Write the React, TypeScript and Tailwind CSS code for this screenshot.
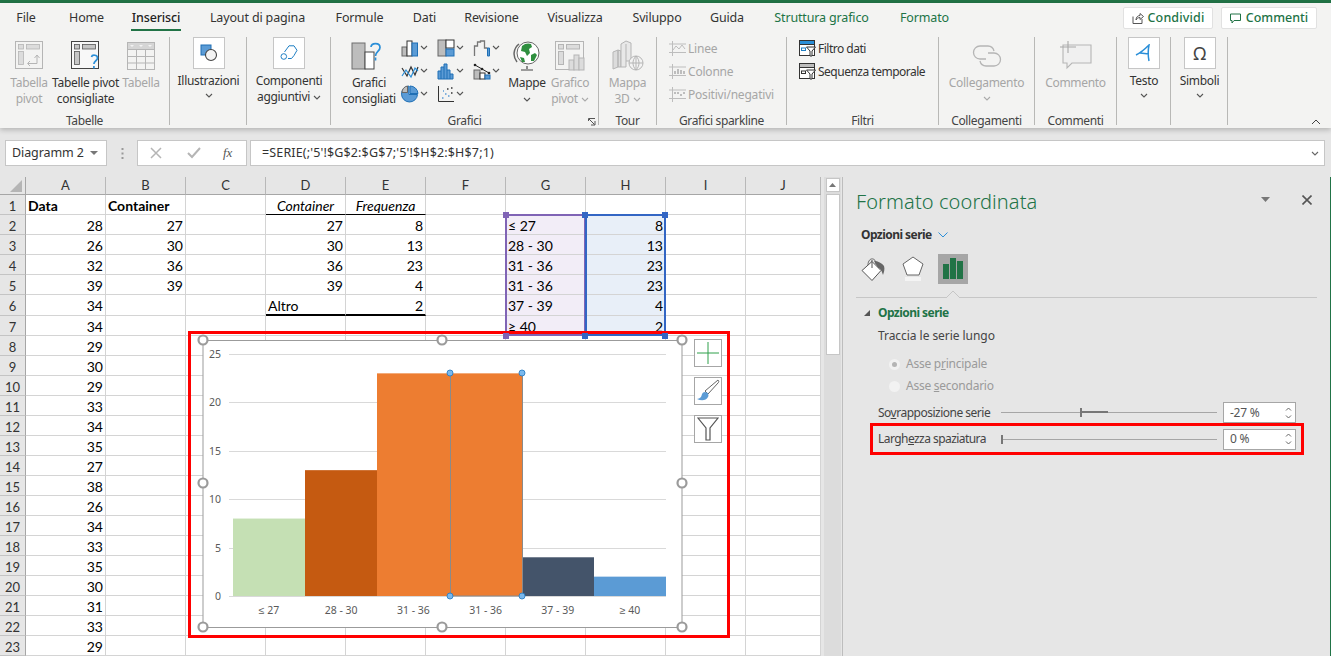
import React from 'react';

const GREEN = '#217346';

const tabs = [
  { label: 'File', w: 'w-[52px]', cls: '' },
  { label: 'Home', w: 'w-[69px]', cls: '' },
  { label: 'Inserisci', w: 'w-[70px]', cls: 'active' },
  { label: 'Layout di pagina', w: 'w-[133px]', cls: '' },
  { label: 'Formule', w: 'w-[71px]', cls: '' },
  { label: 'Dati', w: 'w-[59px]', cls: '' },
  { label: 'Revisione', w: 'w-[75px]', cls: '' },
  { label: 'Visualizza', w: 'w-[92px]', cls: '' },
  { label: 'Sviluppo', w: 'w-[72px]', cls: '' },
  { label: 'Guida', w: 'w-[68px]', cls: '' },
  { label: 'Struttura grafico', w: 'w-[121px]', cls: 'context' },
  { label: 'Formato', w: 'w-[85px]', cls: 'context' },
];

const Chevron = ({ c = '#555' }: { c?: string }) => (
  <svg width="8" height="5" viewBox="0 0 8 5" className="shrink-0">
    <path d="M1 1l3 3 3-3" fill="none" stroke={c} strokeWidth="1.1" />
  </svg>
);

const PivotIcon = ({ c, q }: { c: string; q?: boolean }) => (
  <svg width="29" height="29" viewBox="0 0 29 29">
    <rect x="0.5" y="0.5" width="27" height="27" fill={q ? '#f8f8f8' : 'none'} stroke={c} />
    <rect x="3.5" y="3.5" width="5" height="4.5" fill={q ? '#c6c6c6' : '#dcdcdc'} stroke={q ? '#555' : c} strokeWidth="0.8" />
    <rect x="11.5" y="3.5" width="13" height="4.5" fill={q ? '#c6c6c6' : '#dcdcdc'} stroke={q ? '#555' : c} strokeWidth="0.8" />
    <rect x="3.5" y="10.5" width="5" height="13" fill={q ? '#c6c6c6' : '#dcdcdc'} stroke={q ? '#555' : c} strokeWidth="0.8" />
    {q ? (
      <path d="M20.5 16c.5-2.5 6-2.5 6 1 0 2.8-3.6 2.7-3.6 6M22.9 25v2.6" fill="none" stroke="#2b8fd8" strokeWidth="1.7" />
    ) : (
      <path d="M13 22.5h9v-8M19.5 17l2.5-3 2.5 3M15 20l-2.5 2.5L15 25" fill="none" stroke={c} />
    )}
  </svg>
);

const TableIcon = () => (
  <svg width="28" height="28" viewBox="0 0 28 28">
    <rect x="0.5" y="0.5" width="27" height="27" fill="none" stroke="#b5b5b5" />
    <rect x="1" y="1" width="26" height="6" fill="#d5d5d5" />
    <path d="M.5 7.5h27M.5 14.5h27M.5 21h27M9.5 7v21M18.5 7v21" stroke="#b5b5b5" />
    <path d="M3 3h4L5 5zM12 3h4l-2 2zM21 3h4l-2 2z" fill="#f3f3f3" />
  </svg>
);

const ShapesIcon = () => (
  <svg width="18" height="18" viewBox="0 0 18 18">
    <rect x="1" y="1" width="10" height="10" fill="#5b9bd5" stroke="#1f6fb5" />
    <circle cx="11" cy="11" r="5.5" fill="#f3f3f3" stroke="#444" strokeWidth="1.1" />
  </svg>
);

const AddinIcon = () => (
  <svg width="18" height="18" viewBox="0 0 18 18" fill="none">
    <path d="M4.5 8l4.5-6.2h5l3 4.5-3 5.2-2.5 3H8" stroke="#1f7fc4" strokeWidth="1" />
    <circle cx="3.8" cy="12.5" r="2.8" stroke="#1f7fc4" strokeWidth="1" />
  </svg>
);

const RecommendedIcon = () => (
  <svg width="36" height="30" viewBox="0 0 36 30">
    <rect x="1" y="2" width="13" height="26" fill="#bdbdbd" stroke="#6e6e6e" />
    <rect x="14" y="11" width="9" height="17" fill="#fff" stroke="#444" />
    <path d="M20 6c.5-4.5 9-4.5 9 .5 0 4-4.5 4-4.5 8.500M24.500 16.500v3" fill="none" stroke="#2b8fd8" strokeWidth="1.7" />
  </svg>
);

const smallCharts: Record<string, React.ReactNode> = {
  col: (
    <>
      <rect x="1" y="8" width="5" height="9" fill="#bdbdbd" stroke="#666" />
      <rect x="6" y="2" width="5" height="15" fill="#fff" stroke="#333" />
      <rect x="11" y="4" width="5.500" height="13" fill="#5b9bd5" stroke="#1f6fb5" />
    </>
  ),
  hier: (
    <>
      <rect x="1" y="1" width="8" height="16" fill="#bdbdbd" stroke="#666" />
      <rect x="9" y="1" width="8" height="8" fill="#fff" stroke="#333" />
      <rect x="9" y="10" width="8" height="7" fill="#5b9bd5" stroke="#1f6fb5" />
    </>
  ),
  water: (
    <>
      <path d="M1.500 17V7h3V3h3v-1h4v7h3" fill="none" stroke="#777" strokeWidth="1.300" />
      <path d="M14.500 9v8h2V9z" fill="#5b9bd5" stroke="#1f6fb5" />
    </>
  ),
  line: (
    <>
      <path d="M1 6l5 8 4-9 4 8 3-8" fill="none" stroke="#333" strokeWidth="1.200" />
      <path d="M1 14l4-6 5 7 4-9 3 3" fill="none" stroke="#2b8fd8" strokeWidth="1.200" />
    </>
  ),
  hist: (
    <>
      <path d="M1 17V9h3V5h3V2h3v6h3v4h3v5z" fill="#5b9bd5" stroke="#1f6fb5" />
      <path d="M4 9v8M7 5v12M10 8v9M13 12v5" stroke="#1f6fb5" />
    </>
  ),
  combo: (
    <>
      <rect x="1" y="8" width="6" height="9" fill="#bdbdbd" stroke="#666" />
      <rect x="7" y="11" width="5" height="6" fill="#fff" stroke="#333" />
      <rect x="12" y="13" width="5" height="4" fill="#5b9bd5" stroke="#1f6fb5" />
      <path d="M2 3l7 4 7 4" stroke="#222" />
      <circle cx="2" cy="3" r="1.300" fill="#222" />
      <circle cx="9" cy="7" r="1.300" fill="#222" />
      <circle cx="16" cy="11" r="1.300" fill="#222" />
    </>
  ),
  pie: (
    <>
      <path d="M8 1a8 8 0 1 0 8.500 8.500H8z" fill="#5b9bd5" stroke="#1f6fb5" />
      <path d="M6.500 1a6.500 6.500 0 0 0-5.500 6.500h5.500z" fill="#bdbdbd" stroke="#666" />
      <path d="M9 1a8 8 0 0 1 8 7.500H9z" fill="#5b9bd5" stroke="#1f6fb5" />
    </>
  ),
  scatter: (
    <>
      <path d="M1.500 1v15.500H17" fill="none" stroke="#333" />
      <path d="M5 13h1.500M8 9h1.500M11 11h1.500M6 6h1" stroke="#5b9bd5" strokeWidth="1.500" />
      <path d="M10 4h1.500M14 3h1.500M14 8h1.500" stroke="#333" strokeWidth="1.500" />
    </>
  ),
};

const SmallChart = ({ name }: { name: string }) => (
  <div className="flex items-center gap-[1px] h-[23px]">
    <svg width="18" height="18" viewBox="0 0 18 18">{smallCharts[name]}</svg>
    <Chevron />
  </div>
);

const GlobeIcon = () => (
  <svg width="28" height="32" viewBox="0 0 28 32">
    <path d="M4 22A12.500 12.500 0 0 1 6 4" fill="none" stroke="#666" strokeWidth="1.500" />
    <path d="M14 26v3M8 30h12" stroke="#444" strokeWidth="1.200" />
    <circle cx="15" cy="13" r="11" fill="#fff" stroke="#666" />
    <path d="M9 6c3-3 7-3 9-2l1 3-3 2 1 4-3 3-2-4-4-1zM18 15l4-2 2 2-3 6-3 0zM7 17l4 1 1 4-3 0z" fill="#2f8f3f" />
  </svg>
);

const PivotChartIcon = () => (
  <svg width="30" height="30" viewBox="0 0 30 30" fill="none" stroke="#b5b5b5">
    <rect x="0.500" y="0.500" width="28" height="28" />
    <rect x="3.500" y="3.500" width="5" height="4.500" fill="#dcdcdc" />
    <rect x="11.500" y="3.500" width="13" height="4.500" fill="#dcdcdc" />
    <rect x="3.500" y="10.500" width="5" height="13" fill="#dcdcdc" />
    <rect x="14" y="19" width="5" height="10" fill="#dcdcdc" />
    <rect x="19" y="14" width="5" height="15" fill="#dcdcdc" />
    <rect x="24" y="17" width="5" height="12" fill="#dcdcdc" />
  </svg>
);

const Map3DIcon = () => (
  <svg width="32" height="32" viewBox="0 0 32 32" fill="none" stroke="#b5b5b5">
    <path d="M1 12l5-2v17l-5 2zM6 10l3 1v16l-3 0z" fill="#dcdcdc" />
    <path d="M9 4l5-3 5 2v18H14v6H9z" fill="#e8e8e8" />
    <path d="M14 4v17" />
    <circle cx="24" cy="23" r="7" fill="#f3f3f3" />
    <path d="M17 23h14M24 16v14M24 16c-4 4-4 10 0 14M24 16c4 4 4 10 0 14" />
  </svg>
);

const Spark = ({ kind }: { kind: string }) => (
  <svg width="17" height="15" viewBox="0 0 17 15" fill="none" stroke="#bdbdbd">
    <path d="M0 3h17M0 11.500h17M3.500 0v15" />
    {kind === 'line' && <path d="M4 9l3-4 3 3 3-4 3 4" />}
    {kind === 'col' && <path d="M6 10V7M9 10V5M12 10V6M15 10V7" strokeWidth="2" />}
    {kind === 'neg' && <path d="M6 7V5M9 7V5M12 9V7M15 7V5" strokeWidth="2" />}
  </svg>
);

const SlicerIcon = ({ blue }: { blue?: boolean }) => (
  <svg width="17" height="17" viewBox="0 0 17 17" fill="none">
    <rect x="0.500" y="0.500" width="15" height="15" stroke="#333" fill="#fff" />
    <rect x="1" y="1" width="14" height="3" fill={blue ? '#2b8fd8' : '#bdbdbd'} />
    <path d="M.5 4.500h15" stroke="#333" />
    <rect x="2.500" y="8" width="4" height="2.500" stroke={blue ? '#1f7fc4' : '#333'} />
    <path d="M7.500 7h9l-3.500 4v5h-2v-5z" fill="#fff" stroke="#333" />
  </svg>
);

const LinkIcon = () => (
  <svg width="30" height="22" viewBox="0 0 30 22" fill="none" stroke="#b5b5b5" strokeWidth="1.300">
    <path d="M14 14H8a6.500 6.500 0 0 1 0-13h8a6.500 6.500 0 0 1 6 5" />
    <path d="M16 8h6a6.500 6.500 0 0 1 0 13h-8a6.500 6.500 0 0 1-6-5" />
  </svg>
);

const CommentIcon = () => (
  <svg width="32" height="29" viewBox="0 0 32 29" fill="none" stroke="#b5b5b5" strokeWidth="1.100">
    <path d="M3 4h28v18H12l-5 5v-5H3z" fill="#f0f0f0" />
    <path d="M8 0v12M0 6h16" stroke="#a8a8a8" />
  </svg>
);

const TextIcon = () => (
  <svg width="18" height="18" viewBox="0 0 18 18" fill="none" stroke="#2b8fd8" strokeWidth="1.500">
    <path d="M1 11c4-2 9-6 13-10-1 5-1 11 0 16M5 9l9 1" />
  </svg>
);

const GroupLabel = ({ children }: { children?: React.ReactNode }) => (
  <div className="h-[12px] text-center text-[12px] leading-[16px] text-[#444] tracking-[-0.35px] shrink-0 whitespace-nowrap">{children}</div>
);

const Group = ({ w, label, children }: { w: string; label?: string; children: React.ReactNode }) => (
  <div className={`${w} h-[88px] border-r border-[#b8b8b6] flex flex-col shrink-0 relative`}>
    <div className="flex-1 flex min-h-0">{children}</div>
    <GroupLabel>{label}</GroupLabel>
  </div>
);

const BigBtn = ({ w, icon, lines, off, chev, chevBelow }: { w: string; icon: React.ReactNode; lines: string[]; off?: boolean; chev?: boolean; chevBelow?: boolean }) => (
  <div className={`${w} flex flex-col items-center shrink-0 text-[12px] leading-[16px] tracking-[-0.3px] ${off ? 'text-[#a6a6a6]' : 'text-[#333]'}`}>
    <div className="h-[37px] mb-px flex items-center justify-center shrink-0">{icon}</div>
    {lines.map((l, i) => (
      <div key={l} className="flex items-center gap-[3px] whitespace-nowrap h-[16px]">
        {l}
        {chev && i === lines.length - 1 && <Chevron c={off ? '#aaa' : '#555'} />}
      </div>
    ))}
    {chevBelow && <div className="h-[15px] flex items-center"><Chevron c="#aaa" /></div>}
  </div>
);

const BoxBtn = ({ icon, lines, chevInline, chevBelow }: { icon: React.ReactNode; lines: string[]; chevInline?: boolean; chevBelow?: boolean }) => (
  <div className="flex-1 flex flex-col items-center pl-px text-[12px] leading-[16px] tracking-[-0.3px] text-[#333]">
    <div className="w-[32px] h-[32px] bg-white border border-[#c6c6c6] flex items-center justify-center shrink-0">{icon}</div>
    <div className="h-[4px] shrink-0" />
    {lines.map((l, i) => (
      <div key={l} className="flex items-center gap-[3px] whitespace-nowrap h-[16px]">
        {l}
        {chevInline && i === lines.length - 1 && <Chevron />}
      </div>
    ))}
    {chevBelow && <div className="h-[13px] flex items-center"><Chevron /></div>}
  </div>
);

const Ribbon = () => (
  <div className="bg-[#f3f3f2] h-[125px] shadow-[0_2px_5px_rgba(0,0,0,0.22)] relative">
    <div className="flex h-[34px]">
      {tabs.map((t) => (
        <div key={t.label} className={`${t.w} shrink-0 flex justify-center pt-[6px] text-[12.5px] leading-[18px] tracking-[-0.15px] ${t.cls === 'context' ? 'text-[#217346]' : 'text-[#333]'}`}>
          <span className={t.cls === 'active' ? 'border-b-2 border-[#217346] h-[22px] px-px font-medium text-[#222]' : ''}>{t.label}</span>
        </div>
      ))}
      <div className="ml-auto flex gap-[8px] mr-[14px] mt-[4px]">
        <div className="w-[90px] h-[22px] bg-white border border-[#e1e1e1] rounded-[2px] flex items-center justify-center gap-[4px] text-[12.5px] font-medium text-[#217346] tracking-[0.15px]">
          <svg width="12" height="12" viewBox="0 0 12 12" fill="none" stroke="#555"><path d="M1 4.500v7h9V7M4 8c0-3 2-4.500 4-4.500V1.500L11.500 4.500 8 7.500V5.500C6 5.500 5 6.500 4 8z" /></svg>
          Condividi
        </div>
        <div className="w-[96px] h-[22px] bg-white border border-[#e1e1e1] rounded-[2px] flex items-center justify-center gap-[5px] text-[12.5px] font-medium text-[#217346] tracking-[0px]">
          <svg width="11" height="11" viewBox="0 0 11 11" fill="none" stroke="#217346"><path d="M.5 1h10v6.500H4L2 10V7.500H.5z" /></svg>
          Commenti
        </div>
      </div>
    </div>
    <div className="flex h-[88px]">
      <Group w="w-[170px]" label="Tabelle">
        <BigBtn w="w-[58px]" off icon={<PivotIcon c="#b5b5b5" />} lines={['Tabella', 'pivot']} />
        <BigBtn w="w-[55px]" icon={<PivotIcon c="#444" q />} lines={['Tabelle pivot', 'consigliate']} />
        <BigBtn w="w-[56px]" off icon={<TableIcon />} lines={['Tabella']} />
      </Group>
      <Group w="w-[77px]">
        <BoxBtn icon={<ShapesIcon />} lines={['Illustrazioni']} chevBelow />
      </Group>
      <Group w="w-[84px]">
        <BoxBtn icon={<AddinIcon />} lines={['Componenti', 'aggiuntivi']} chevInline />
      </Group>
      <Group w="w-[268px]" label="Grafici">
        <BigBtn w="w-[76px]" icon={<RecommendedIcon />} lines={['Grafici', 'consigliati']} />
        <div className="flex gap-[9px] -ml-[6px] -mt-px">
          <div className="flex flex-col"><SmallChart name="col" /><SmallChart name="line" /><SmallChart name="pie" /></div>
          <div className="flex flex-col"><SmallChart name="hier" /><SmallChart name="hist" /><SmallChart name="scatter" /></div>
          <div className="flex flex-col"><SmallChart name="water" /><SmallChart name="combo" /></div>
        </div>
        <div className="w-[50px] shrink-0 flex flex-col items-center ml-[2px] text-[12px] leading-[16px] tracking-[-0.3px] text-[#333]">
          <div className="h-[37px] mb-px flex items-center"><GlobeIcon /></div>
          <div className="h-[16px]">Mappe</div>
          <div className="h-[16px] flex items-center"><Chevron /></div>
        </div>
        <BigBtn w="w-[36px]" off icon={<PivotChartIcon />} lines={['Grafico', 'pivot']} chev />
        <svg width="8" height="8" viewBox="0 0 8 8" className="absolute right-[2px] bottom-[-1px]" fill="none" stroke="#555">
          <path d="M.5 3V.5H7M1 1l5.500 5.500M3 7h4V3" />
        </svg>
      </Group>
      <Group w="w-[58px]" label="Tour">
        <BigBtn w="w-full" off icon={<Map3DIcon />} lines={['Mappa', '3D']} chev />
      </Group>
      <Group w="w-[130px]" label="Grafici sparkline">
        <div className="flex flex-col pl-[12px] text-[12px] tracking-[-0.2px] text-[#a6a6a6]">
          {[['line', 'Linee'], ['col', 'Colonne'], ['neg', 'Positivi/negativi']].map(([k, l]) => (
            <div key={k} className="flex items-center gap-[2px] h-[23px] whitespace-nowrap"><Spark kind={k} />{l}</div>
          ))}
        </div>
      </Group>
      <Group w="w-[152px]" label="Filtri">
        <div className="flex flex-col pl-[12px] text-[12px] tracking-[-0.5px] text-[#333]">
          <div className="flex items-center gap-[2px] h-[23px] whitespace-nowrap"><SlicerIcon blue />Filtro dati</div>
          <div className="flex items-center gap-[2px] h-[23px] whitespace-nowrap"><SlicerIcon />Sequenza temporale</div>
        </div>
      </Group>
      <Group w="w-[96px]" label="Collegamenti">
        <BigBtn w="w-full" off icon={<LinkIcon />} lines={['Collegamento']} chevBelow />
      </Group>
      <Group w="w-[82px]" label="Commenti">
        <BigBtn w="w-full" off icon={<CommentIcon />} lines={['Commento']} />
      </Group>
      <Group w="w-[54px]">
        <BoxBtn icon={<TextIcon />} lines={['Testo']} chevBelow />
      </Group>
      <Group w="w-[57px]">
        <BoxBtn icon={<span className="text-[18px] leading-none text-[#444]">Ω</span>} lines={['Simboli']} chevBelow />
      </Group>
    </div>
    <svg width="10" height="6" viewBox="0 0 10 6" className="absolute right-[10px] bottom-[3px]" fill="none" stroke="#444"><path d="M1 5l4-4 4 4" /></svg>
  </div>
);

const FormulaBar = () => (
  <div className="flex items-stretch h-[26px] mt-[12px] text-[12.5px] text-[#333] pl-[5px] pr-[6px]">
    <div className="w-[102px] bg-white border border-[#c6c6c6] flex items-center pl-[6px] pr-[8px] justify-between tracking-[-0.1px]">
      Diagramm 2
      <svg width="8" height="4" viewBox="0 0 8 4"><path d="M0 0h8L4 4z" fill="#777" /></svg>
    </div>
    <div className="w-[30px] flex items-center justify-center">
      <svg width="3" height="11" viewBox="0 0 3 11"><path d="M1.500 0v2M1.500 4.500v2M1.500 9v2" stroke="#999" strokeWidth="2" /></svg>
    </div>
    <div className="w-[110px] bg-white border border-[#c6c6c6] flex items-center pl-[12px]">
      <svg width="12" height="12" viewBox="0 0 12 12" fill="none" stroke="#b5b5b5" strokeWidth="1.500"><path d="M1 1l10 10M11 1L1 11" /></svg>
      <svg width="14" height="12" viewBox="0 0 14 12" fill="none" stroke="#b5b5b5" strokeWidth="2" className="ml-[25px]"><path d="M1 6l4 4 8-9" /></svg>
      <span className="ml-[22px] italic font-['Liberation_Serif',serif] text-[13px] text-[#555]">fx</span>
    </div>
    <div className="ml-[3px] flex-1 bg-white border border-[#c6c6c6] flex items-center pl-[11px] pr-[5px] justify-between tracking-[0.15px]">
      =SERIE(;'5'!$G$2:$G$7;'5'!$H$2:$H$7;1)
      <Chevron c="#666" />
    </div>
  </div>
);

const COLS = ['A', 'B', 'C', 'D', 'E', 'F', 'G', 'H', 'I', 'J'];
const COLW = ['w-20', 'w-20', 'w-20', 'w-20', 'w-20', 'w-20', 'w-20', 'w-20', 'w-20', 'w-[75px]'];
const DATA_A = [28, 26, 32, 39, 34, 34, 29, 30, 29, 33, 34, 35, 27, 38, 26, 34, 33, 35, 30, 31, 33, 29];

type Cell = { t?: string | number; align?: string; cls?: string };
const LEFT = 'text-left pl-[2px]';
const CENTER = 'text-center';
const cells: Record<string, Cell> = {
  A1: { t: 'Data', align: LEFT, cls: 'font-bold' },
  B1: { t: 'Container', align: LEFT, cls: 'font-bold' },
  D1: { t: 'Container', align: CENTER, cls: 'italic border-b-black' },
  E1: { t: 'Frequenza', align: CENTER, cls: 'italic border-b-black' },
  B2: { t: 27 }, B3: { t: 30 }, B4: { t: 36 }, B5: { t: 39 },
  D2: { t: 27 }, D3: { t: 30 }, D4: { t: 36 }, D5: { t: 39 },
  E2: { t: 8 }, E3: { t: 13 }, E4: { t: 23 }, E5: { t: 4 },
  D6: { t: 'Altro', align: LEFT, cls: 'border-b-2 border-b-black' },
  E6: { t: 2, cls: 'border-b-2 border-b-black' },
  G2: { t: '≤ 27', align: LEFT }, G3: { t: '28 - 30', align: LEFT }, G4: { t: '31 - 36', align: LEFT },
  G5: { t: '31 - 36', align: LEFT }, G6: { t: '37 - 39', align: LEFT }, G7: { t: '≥ 40', align: LEFT },
  H2: { t: 8 }, H3: { t: 13 }, H4: { t: 23 }, H5: { t: 23 }, H6: { t: 4 }, H7: { t: 2 },
};
DATA_A.forEach((v, i) => { cells[`A${i + 2}`] = { t: v }; });

const selFill = (c: string, r: number) => {
  if (r >= 2 && r <= 7 && c === 'G') return 'bg-[#f2edf7]';
  if (r >= 2 && r <= 7 && c === 'H') return 'bg-[#e8eff8]';
  return 'bg-white';
};

const Sheet = () => (
  <div className="w-[821px] shrink-0 overflow-hidden">
    <div className="flex h-[18px]">
      <div className="w-[26px] shrink-0 border-r border-b border-[#a6a6a6] bg-[#e6e6e6] relative">
        <svg width="13" height="13" viewBox="0 0 13 13" className="absolute left-[10px] top-[3px]"><path d="M12 0v12H0z" fill="#b5b5b5" /></svg>
      </div>
      {COLS.map((c, i) => (
        <div key={c} className={`${COLW[i]} shrink-0 bg-[#e6e6e6] border-r border-b border-r-[#b8b8b8] border-b-[#a6a6a6] text-center text-[13px] leading-[17px] text-[#333] font-['Lato',sans-serif]`}>{c}</div>
      ))}
    </div>
    {Array.from({ length: 23 }, (_, idx) => idx + 1).map((r) => (
      <div key={r} className={`flex ${r === 6 ? 'h-[21px]' : 'h-[20px]'}`}>
        <div className="w-[26px] shrink-0 bg-[#e6e6e6] border-r border-b border-r-[#a6a6a6] border-b-[#c4c4c4] text-center text-[13px] leading-[22px] text-[#333] font-['Lato',sans-serif] overflow-hidden">{r}</div>
        {COLS.map((c, i) => {
          const cell = cells[`${c}${r}`];
          return (
            <div key={c} className={`${COLW[i]} shrink-0 border-r border-b border-[#d4d4d4] ${selFill(c, r)} ${cell?.cls ?? ''} ${cell?.align ?? 'text-right pr-[2px]'} text-[14px] leading-[22px] text-black font-['Lato',sans-serif] whitespace-nowrap overflow-hidden`}>
              {cell?.t}
            </div>
          );
        })}
      </div>
    ))}
  </div>
);

const bars = [
  { x: 233, w: 72, v: 8, c: '#c5e0b4' },
  { x: 305, w: 72, v: 13, c: '#c55a11' },
  { x: 377, w: 73, v: 23, c: '#ed7d31' },
  { x: 450, w: 72, v: 23, c: '#ed7d31' },
  { x: 522, w: 72, v: 4, c: '#44546a' },
  { x: 594, w: 72, v: 2, c: '#5b9bd5' },
];
const xLabels = ['≤ 27', '28 - 30', '31 - 36', '31 - 36', '37 - 39', '≥ 40'];
const yOf = (v: number) => 596 - v * 9.68;

const Handle = ({ x, y }: { x: number; y: number }) => (
  <circle cx={x} cy={y} r="4.500" fill="#fff" stroke="#9b9b9b" strokeWidth="2.200" />
);
const Dot = ({ x, y }: { x: number; y: number }) => (
  <circle cx={x} cy={y} r="3" fill="#7ab8ec" stroke="#2b7fc4" strokeWidth="0.900" />
);

const Chart = () => (
  <svg width="500" height="300" viewBox="195 334 500 300" className="absolute left-[195px] top-[157px] font-['Noto_Sans',sans-serif]">
    <rect x="203" y="340.500" width="479" height="287" fill="#fff" stroke="#9b9b9b" />
    {[0, 5, 10, 15, 20, 25].map((v) => (
      <g key={v}>
        <path d={`M229 ${Math.round(yOf(v)) + 0.5}H666`} stroke="#d9d9d9" />
        <text x="221" y={yOf(v) + 4} textAnchor="end" fontSize="10.500" fill="#595959">{v}</text>
      </g>
    ))}
    {bars.map((b) => (
      <rect key={b.x} x={b.x} y={yOf(b.v)} width={b.w} height={596 - yOf(b.v)} fill={b.c} />
    ))}
    <path d="M450.500 373V596H522.500V373" fill="none" stroke="#8a8a8a" />
    {xLabels.map((l, i) => (
      <text key={i} x={269 + i * 72.2} y="614" textAnchor="middle" fontSize="10.500" fill="#595959">{l}</text>
    ))}
    <Dot x={450} y={373} /><Dot x={522} y={373} /><Dot x={450} y={596} /><Dot x={522} y={596} />
    <Handle x={203} y={340} /><Handle x={442} y={340} /><Handle x={682} y={340} />
    <Handle x={203} y={483} /><Handle x={682} y={483} />
    <Handle x={203} y={627} /><Handle x={442} y={627} /><Handle x={682} y={627} />
  </svg>
);

const ChartTool = ({ top, children }: { top: string; children: React.ReactNode }) => (
  <div className={`absolute left-[694px] ${top} w-[28px] h-[28px] bg-white border border-[#a6a6a6] flex items-center justify-center`}>{children}</div>
);

const Square = ({ pos, c }: { pos: string; c: string }) => (
  <div className={`absolute w-[6px] h-[6px] ${pos} ${c}`} />
);

const Overlays = () => (
  <>
    {/* selezione dati */}
    <div className="absolute left-[505px] top-[37px] w-[81px] h-[122px] border-2 border-[#8064b5]" />
    <div className="absolute left-[585px] top-[37px] w-[81px] h-[122px] border-2 border-[#3366c4]" />
    <Square pos="left-[503px] top-[35px]" c="bg-[#8064b5]" />
    <Square pos="left-[582px] top-[35px]" c="bg-[#3366c4]" />
    <Square pos="left-[662px] top-[35px]" c="bg-[#3366c4]" />
    {/* riquadro rosso */}
    <div className="absolute left-[188px] top-[154px] w-[542px] h-[307px] border-[3px] border-[#ff0000]" />
    <Square pos="left-[503px] top-[156px]" c="bg-[#8064b5]" />
    <Square pos="left-[582px] top-[156px]" c="bg-[#3366c4]" />
    <Square pos="left-[662px] top-[156px]" c="bg-[#3366c4]" />
    <Chart />
    <ChartTool top="top-[162px]">
      <svg width="22" height="22" viewBox="0 0 22 22"><path d="M11 0v22M0 11h22" stroke="#2ea04a" /></svg>
    </ChartTool>
    <ChartTool top="top-[200px]">
      <svg width="24" height="24" viewBox="0 0 24 24">
        <path d="M22 1c1 1 1 2 0 3L12 15l-3-3z" fill="#fff" stroke="#666" />
        <path d="M9 13c-3 0-3 3-4 5-1 1-3 2-4 2 4 2 9 2 11-2 1-1 0-3 0-4z" fill="#5b9bd5" />
      </svg>
    </ChartTool>
    <ChartTool top="top-[238px]">
      <svg width="22" height="24" viewBox="0 0 22 24"><path d="M1 1h20l-8 10v12H9V11z" fill="#fff" stroke="#555" strokeWidth="1.200" /></svg>
    </ChartTool>
  </>
);

const Scrollbar = () => (
  <div className="w-[17px] ml-[3px] shrink-0 bg-[#dcdcdc] flex flex-col items-center pt-px gap-[2px] h-[480px]">
    <div className="w-[14px] h-[14px] bg-white border border-[#c6c6c6] flex items-center justify-center">
      <svg width="7" height="4" viewBox="0 0 7 4"><path d="M3.500 0l3.500 4H0z" fill="#777" /></svg>
    </div>
    <div className="w-[14px] h-[161px] bg-white border border-[#c6c6c6]" />
  </div>
);

const Slider = ({ thumb, dark }: { thumb: string; dark?: string }) => (
  <div className="w-[216px] h-px bg-[#a6a6a6] relative shrink-0">
    <div className={`absolute ${thumb} -top-[4px] w-[2px] h-[9px] bg-[#777]`} />
    {dark && <div className={`absolute ${dark} -top-px h-[2px] bg-[#777]`} />}
  </div>
);

const Spin = ({ value }: { value: string }) => (
  <div className="w-[73px] h-[21px] bg-white border border-[#a6a6a6] flex items-center justify-between pl-[6px] pr-[3px] text-[12px] text-[#555] shrink-0">
    {value}
    <div className="flex flex-col gap-[4px]">
      <svg width="7" height="4" viewBox="0 0 7 4" className="block" fill="none" stroke="#666"><path d="M1 3.500l2.500-2.500 2.500 2.500" /></svg>
      <svg width="7" height="4" viewBox="0 0 7 4" className="block" fill="none" stroke="#666"><path d="M1 .5l2.500 2.500 2.500-2.500" /></svg>
    </div>
  </div>
);

const Radio = ({ on, children }: { on?: boolean; children: React.ReactNode }) => (
  <div className="flex items-center h-[22px] pl-[46px] gap-[6px] text-[#9a9a9a]">
    <div className="w-[11px] h-[11px] rounded-full bg-[#f2f2f2] flex items-center justify-center">
      {on && <div className="w-[5px] h-[5px] rounded-full bg-[#b5b5b5]" />}
    </div>
    <span>{children}</span>
  </div>
);

const Pane = () => (
  <div className="flex-1 ml-[1px] border-l border-[#bdbdbd] border-r border-r-[#217346] bg-[#e6e6e6] h-[480px] text-[12px] tracking-[-0.25px] text-[#444]">
    <div className="flex items-center h-[50px] pl-[13px] pr-[18px]">
      <div className="text-[20px] font-light text-[#217346] tracking-[0.1px] leading-[50px]">Formato coordinata</div>
      <svg width="9" height="5" viewBox="0 0 9 5" className="ml-auto mr-[32px] -mt-[5px]"><path d="M0 0h9L4.500 5z" fill="#777" /></svg>
      <svg width="10" height="10" viewBox="0 0 10 10" className="-mt-[5px]" fill="none" stroke="#555" strokeWidth="1.600"><path d="M.5.5l9 9M9.500.5l-9 9" /></svg>
    </div>
    <div className="flex items-center gap-[6px] pl-[18px] h-[16px] font-bold text-[#333] tracking-[-0.55px]">
      Opzioni serie
      <svg width="10" height="6" viewBox="0 0 10 6" fill="none" stroke="#2b8fd8"><path d="M.5.5L5 5 9.500.5" /></svg>
    </div>
    <div className="flex items-center h-[32px] mt-[10px] pl-[18px]">
      <svg width="25" height="25" viewBox="0 0 25 25">
        <path d="M13 4c4 0 8 2 10 5 1 3 0 6-1 9-1-3-2-7-5-7z" fill="#666" />
        <path d="M1 13.500L11 4.500l9 9-9 10z" fill="#fff" stroke="#555" />
        <path d="M7 8c0-8 8-8 8-1" fill="none" stroke="#666" />
        <path d="M11 3v8" stroke="#555" />
      </svg>
      <svg width="22" height="26" viewBox="0 0 22 26" className="ml-[16px]">
        <path d="M11 1l10 7-4 11H5L1 8z" fill="#fff" stroke="#666" />
        <rect x="3" y="21" width="16" height="4" fill="#f4f4f4" />
      </svg>
      <div className="w-[30px] h-[30px] ml-[14px] bg-[#a6a6a6] flex items-end justify-center gap-[1px] pb-[5px]">
        <div className="w-[6px] h-[15px] bg-[#217346]" />
        <div className="w-[6px] h-[21px] bg-[#217346]" />
        <div className="w-[6px] h-[18px] bg-[#217346]" />
      </div>
    </div>
    <div className="relative mx-[13px] h-[13px] border-b border-[#c6c6c6]">
      <svg width="14" height="8" viewBox="0 0 14 8" className="absolute left-[90px] bottom-[-1px]"><path d="M0 8l7-7 7 7" fill="#e6e6e6" stroke="#c6c6c6" /></svg>
    </div>
    <div className="flex items-center h-[22px] mt-[4px] pl-[20px]">
      <svg width="8" height="8" viewBox="0 0 8 8"><path d="M7 1v6H1z" fill="#555" /></svg>
      <span className="ml-[7px] font-bold text-[#217346] tracking-[-0.55px]">Opzioni serie</span>
    </div>
    <div className="pl-[35px] h-[22px] leading-[24px] tracking-[-0.05px]">Traccia le serie lungo</div>
    <div className="h-[7px]" />
    <Radio on>Asse p<u>r</u>incipale</Radio>
    <Radio>Asse <u>s</u>econdario</Radio>
    <div className="flex items-center h-[21px] mt-[5px] pl-[35px] tracking-[-0.5px]">
      <span className="w-[123px] shrink-0">So<u>v</u>rapposizione serie</span>
      <Slider thumb="left-[79px]" dark="left-[79px] w-[28px]" />
      <div className="ml-[6px] tracking-[-0.25px]"><Spin value="-27 %" /></div>
    </div>
    <div className="flex items-center h-[32px] ml-[27px] mr-[26px] border-[3px] border-[#ff0000] pl-[5px] tracking-[-0.55px]">
      <span className="w-[123px] shrink-0">Largh<u>e</u>zza spaziatura</span>
      <Slider thumb="left-0" />
      <div className="ml-[6px] tracking-[-0.25px]"><Spin value="0 %" /></div>
    </div>
  </div>
);

export default function App() {
  return (
    <div className="w-[1331px] h-[656px] overflow-hidden bg-[#e6e6e6] font-['Noto_Sans',sans-serif]">
      <div className="h-[3px]" style={{ backgroundColor: GREEN }} />
      <Ribbon />
      <FormulaBar />
      <div className="relative flex mt-[11px]">
        <Sheet />
        <Scrollbar />
        <Pane />
        <Overlays />
      </div>
    </div>
  );
}
